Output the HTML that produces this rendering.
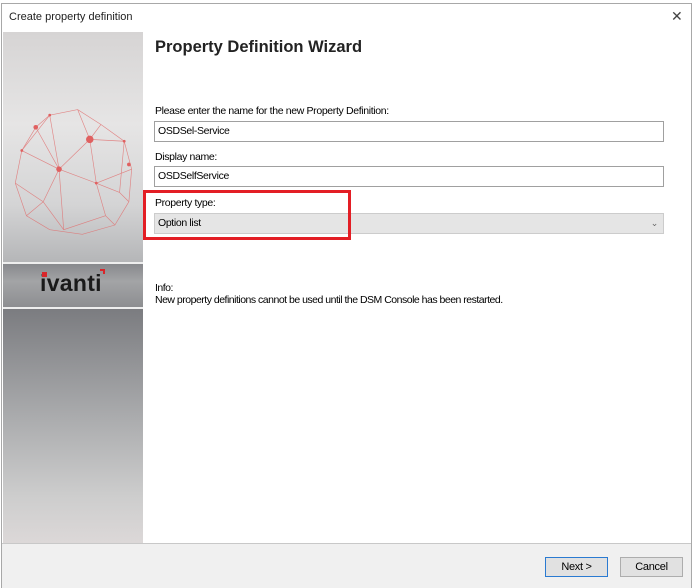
<!DOCTYPE html>
<html><head><meta charset="utf-8"><style>
body{margin:0;width:693px;height:587px;background:#fff;position:relative;overflow:hidden;font-family:"Liberation Sans",Arial,sans-serif;}
.win{position:absolute;left:1px;top:3px;width:689px;height:584px;border:1px solid #a8a8a8;border-bottom:none;background:#fff;}
.t{position:absolute;font-size:10.5px;color:#000;letter-spacing:-0.35px;}
.title{left:9px;top:11px;font-size:11px;color:#222;letter-spacing:0;}
.close{position:absolute;left:671px;top:8px;font-size:14px;color:#444;font-weight:100;}
.lp{position:absolute;left:3px;top:32px;width:140px;height:511px;}
.top{position:absolute;left:0;top:0;width:140px;height:230px;background:linear-gradient(#d6d4d4,#e6e5e5 40%,#d4d4d5 75%,#b5b6b8);}
.band{position:absolute;left:0;top:230px;width:140px;height:43px;background:linear-gradient(#88898d,#a3a4a6 40%,#8d8e91);border-top:2px solid #eee;border-bottom:2px solid #eee;}
.bot{position:absolute;left:0;top:277px;width:140px;height:234px;background:linear-gradient(#7b7c80,#a9aaac 45%,#cdcdcd 80%,#dcd8d8);}
.logo{position:absolute;left:37px;top:238px;font-size:23px;font-weight:bold;color:#1a1a1a;letter-spacing:0.3px;}
.box{position:absolute;left:154px;width:505px;height:19px;border:1px solid #a0a0a0;background:#fff;font-size:10.5px;letter-spacing:-0.35px;line-height:19px;padding-left:3px;box-sizing:content-box;}
.bar{position:absolute;left:2px;top:543px;width:689px;height:44px;background:#f0f0f0;border-top:1px solid #c8c8c8;}
.btn{position:absolute;top:557px;height:18px;width:61px;border:1px solid #adadad;background:#e1e1e1;font-size:11px;letter-spacing:-0.3px;text-align:center;line-height:18px;}
</style></head><body>
<div class="win"></div>
<div class="t title">Create property definition</div>
<div class="close">✕</div>
<div class="lp">
<div class="top"></div>
<svg style="position:absolute;left:4px;top:72px" width="132" height="135" viewBox="0 30 140 145">
<g stroke="#e07070" stroke-width="0.7" fill="none" opacity="0.8">
<path d="M45 42 L75 36 L100 52 L125 70 L133 100 L130 135 L115 160 L80 170 L45 165 L20 150 L8 115 L15 80 Z"/>
<path d="M15 80 L55 100 L88 68 L125 70 M45 42 L55 100 L38 135 L8 115 M55 100 L95 115 L88 68 L75 36 M95 115 L133 100 M95 115 L105 150 L115 160 M38 135 L60 165 L105 150 M55 100 L60 165 M20 150 L38 135 M100 52 L88 68 M125 70 L120 125 L130 135 M120 125 L95 115 M30 55 L55 100 M30 55 L45 42 M15 80 L30 55"/>
</g>
<g fill="#e06060"><circle cx="88" cy="68" r="4"/><circle cx="55" cy="100" r="3"/><circle cx="30" cy="55" r="2.5"/><circle cx="130" cy="95" r="2"/><circle cx="45" cy="42" r="1.5"/><circle cx="125" cy="70" r="1.5"/><circle cx="95" cy="115" r="1.5"/><circle cx="15" cy="80" r="1.5"/></g>
</svg>
<div class="band"></div>
<div class="bot"></div>
<div class="logo">ivanti</div>
<div style="position:absolute;left:39px;top:240px;width:5px;height:5px;background:#d8262b"></div>
<div style="position:absolute;left:97px;top:237px;width:5px;height:5px;border-top:2px solid #d8262b;border-right:2px solid #d8262b;box-sizing:border-box"></div>
</div>
<div class="t" style="left:155px;top:38px;font-size:16.5px;font-weight:bold;color:#222;letter-spacing:0">Property Definition Wizard</div>
<div class="t" style="left:155px;top:105px">Please enter the name for the new Property Definition:</div>
<div class="box" style="top:121px">OSDSel-Service</div>
<div class="t" style="left:155px;top:151px">Display name:</div>
<div class="box" style="top:166px">OSDSelfService</div>
<div class="t" style="left:155px;top:197px">Property type:</div>
<div class="box" style="top:213px;background:#e5e5e5;border-color:#ccc">Option list<span style="position:absolute;right:5px;top:0;color:#666;font-size:9px">&#8964;</span></div>
<div style="position:absolute;left:143px;top:190px;width:202px;height:44px;border:3px solid #e31e25"></div>
<div class="t" style="left:155px;top:282px;line-height:12px;letter-spacing:-0.5px">Info:<br>New property definitions cannot be used until the DSM Console has been restarted.</div>
<div class="bar"></div>
<div class="btn" style="left:545px;border:1px solid #2a7ad1">Next &gt;</div>
<div class="btn" style="left:620px">Cancel</div>
</body></html>
